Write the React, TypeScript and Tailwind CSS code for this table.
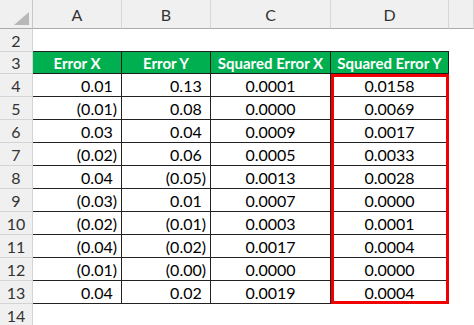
const rows = [
  ['0.01', '0.13', '0.0001', '0.0158'],
  ['(0.01)', '0.08', '0.0000', '0.0069'],
  ['0.03', '0.04', '0.0009', '0.0017'],
  ['(0.02)', '0.06', '0.0005', '0.0033'],
  ['0.04', '(0.05)', '0.0013', '0.0028'],
  ['(0.03)', '0.01', '0.0007', '0.0000'],
  ['(0.02)', '(0.01)', '0.0003', '0.0001'],
  ['(0.04)', '(0.02)', '0.0017', '0.0004'],
  ['(0.01)', '(0.00)', '0.0000', '0.0000'],
  ['0.04', '0.02', '0.0019', '0.0004'],
]

const font = { fontFamily: 'Lato, "Open Sans", sans-serif' }

const RowHead = ({ n }: { n: number }) => (
  <div className='flex items-center justify-center pt-[1px] bg-[#f0f0f0] border-r border-b border-[#d4d4d4] text-[16px] text-[#333]'>
    {n}
  </div>
)

const Acct = ({ v }: { v: string }) => (
  <div className='flex items-center justify-end pt-[2px] pr-[4px] border-r border-b border-[#222] text-[16px] text-black'>
    {v}
    {!v.startsWith('(') && <span className='invisible'>)</span>}
  </div>
)

const Center = ({ v }: { v: string }) => (
  <div className='flex items-center justify-center pt-[2px] border-r border-b border-[#222] text-[16px] text-black'>
    {v}
  </div>
)

const App = () => {
  return (
    <div className='w-[474px] h-[325px] overflow-hidden bg-white' style={font}>
      <div className='relative grid grid-cols-[33px_89px_89px_120px_118px_1fr] grid-rows-[29px_23px_22px_repeat(10,23px)_23px]'>
        {/* column headers */}
        <div className='flex items-end justify-end pr-[3px] pb-[3px] bg-[#f0f0f0] border-r border-b border-[#c8c8c8] border-b-[#ababab]'>
          <svg width='15' height='13' viewBox='0 0 15 13'>
            <polygon points='15,0 15,13 0,13' fill='#b8b8b8' />
          </svg>
        </div>
        {['A', 'B', 'C', 'D', ''].map((c) => (
          <div key={c} className='flex items-center justify-center pt-[2px] bg-[#f0f0f0] border-r border-b border-[#d6d6d6] border-b-[#ababab] text-[16px] text-[#333]'>
            {c}
          </div>
        ))}

        {/* row 2 */}
        <RowHead n={2} />
        <div className='border-b border-[#222]' />
        <div className='border-b border-[#222]' />
        <div className='border-b border-[#222]' />
        <div className='border-b border-[#222]' />
        <div />

        {/* row 3 header */}
        <RowHead n={3} />
        {['Error X', 'Error Y', 'Squared Error X', 'Squared Error Y'].map((h) => (
          <div key={h} className='flex items-center justify-center pt-[1px] bg-[#00b050] border-r border-b border-[#1d1d1d] text-[15px] font-bold text-white whitespace-nowrap'>
            {h}
          </div>
        ))}
        <div />

        {rows.map((r, i) => (
          <div key={i} className='contents'>
            <RowHead n={i + 4} />
            <Acct v={r[0]} />
            <Acct v={r[1]} />
            <Center v={r[2]} />
            <Center v={r[3]} />
            <div />
          </div>
        ))}

        <RowHead n={14} />
        <div />
        <div />
        <div />
        <div />
        <div />

        {/* highlight around Squared Error Y values */}
        <div className='absolute inset-0 col-start-5 col-end-6 row-start-4 row-end-14 border-[3px] border-[#f00000] pointer-events-none' />
      </div>
    </div>
  )
}

export default App
